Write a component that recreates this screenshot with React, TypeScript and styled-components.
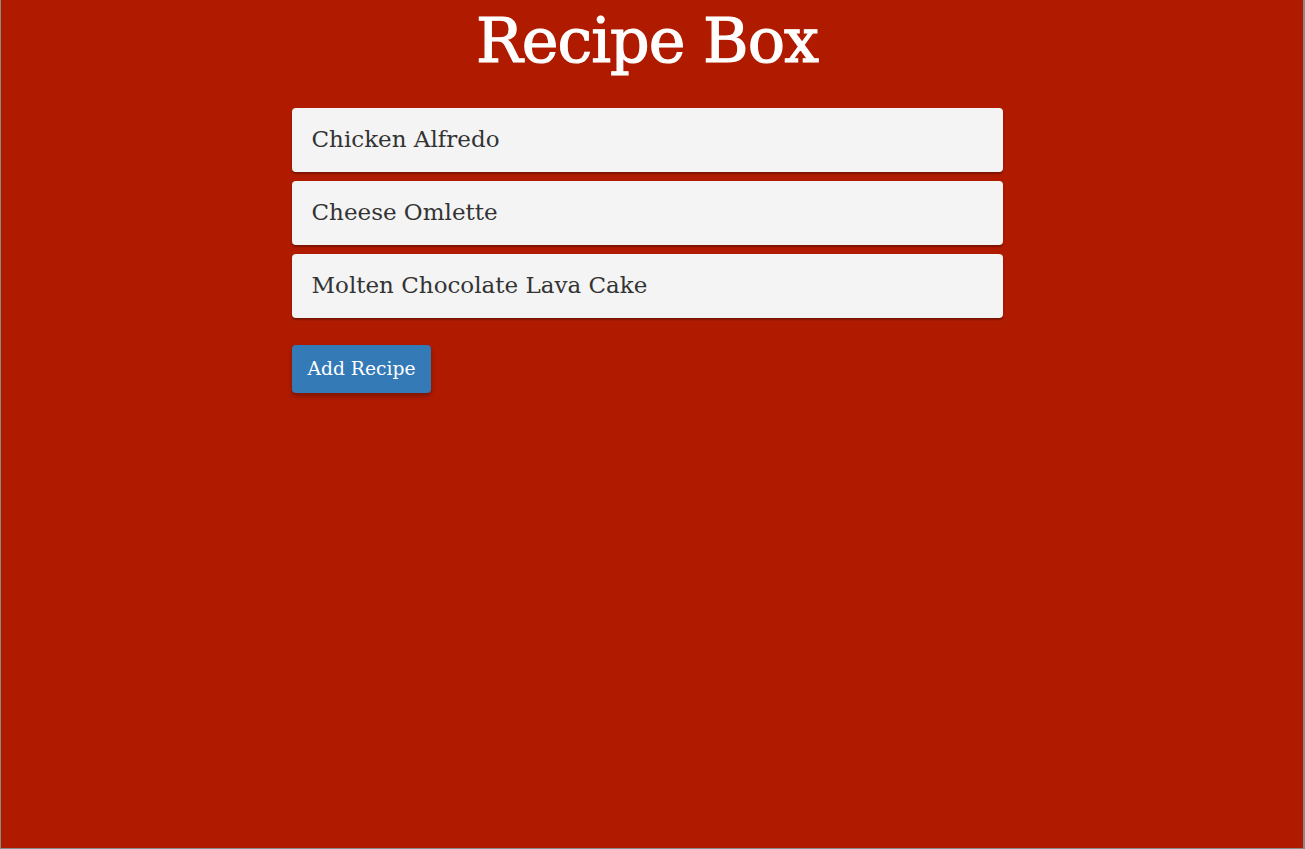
import React from "react";
import styled, { createGlobalStyle } from "styled-components";

const GlobalStyle = createGlobalStyle`
  html, body {
    margin: 0;
    padding: 0;
    background: #b01b00;
  }
  * { box-sizing: border-box; }
`;

const Page = styled.div`
  min-height: 849px;
  background: #b01b00;
  border-left: 1px solid #8a8a8a;
  border-right: 2px solid #8a8a8a;
  border-bottom: 1px solid #8a8a8a;
  padding-right: 10px;
  font-family: "DejaVu Serif", "Liberation Serif", serif;
`;

const Column = styled.main`
  width: 711px;
  margin: 0 auto;
  display: flex;
  flex-direction: column;
`;

const Title = styled.h1`
  margin: 0;
  padding-top: 0;
  height: 108px;
  text-align: center;
  color: #ffffff;
  font-size: 62px;
  font-weight: normal;
  line-height: 82px;
  letter-spacing: -1px;
  -webkit-text-stroke: 1.2px #ffffff;
`;

const List = styled.ul`
  list-style: none;
  margin: 0;
  padding: 0;
  display: flex;
  flex-direction: column;
  gap: 9px;
`;

const Card = styled.li`
  height: 64px;
  display: flex;
  align-items: center;
  padding: 0 20px 2px;
  background: #f4f4f4;
  border-radius: 4px;
  box-shadow: 0 2px 2px rgba(0, 0, 0, 0.3);
  color: #333333;
  font-size: 23px;
  cursor: pointer;
`;

const AddButton = styled.button`
  align-self: flex-start;
  margin-top: 27px;
  height: 48px;
  padding: 0 16px 2px;
  border: none;
  border-radius: 4px;
  background: #337ab7;
  color: #ffffff;
  font-family: inherit;
  font-size: 18.7px;
  box-shadow: 0 3px 5px rgba(0, 0, 0, 0.3);
  cursor: pointer;
`;

const recipes = ["Chicken Alfredo", "Cheese Omlette", "Molten Chocolate Lava Cake"];

export default function App() {
  return (
    <>
      <GlobalStyle />
      <Page>
        <Column>
          <Title>Recipe Box</Title>
          <List>
            {recipes.map((name) => (
              <Card key={name}>{name}</Card>
            ))}
          </List>
          <AddButton>Add Recipe</AddButton>
        </Column>
      </Page>
    </>
  );
}
